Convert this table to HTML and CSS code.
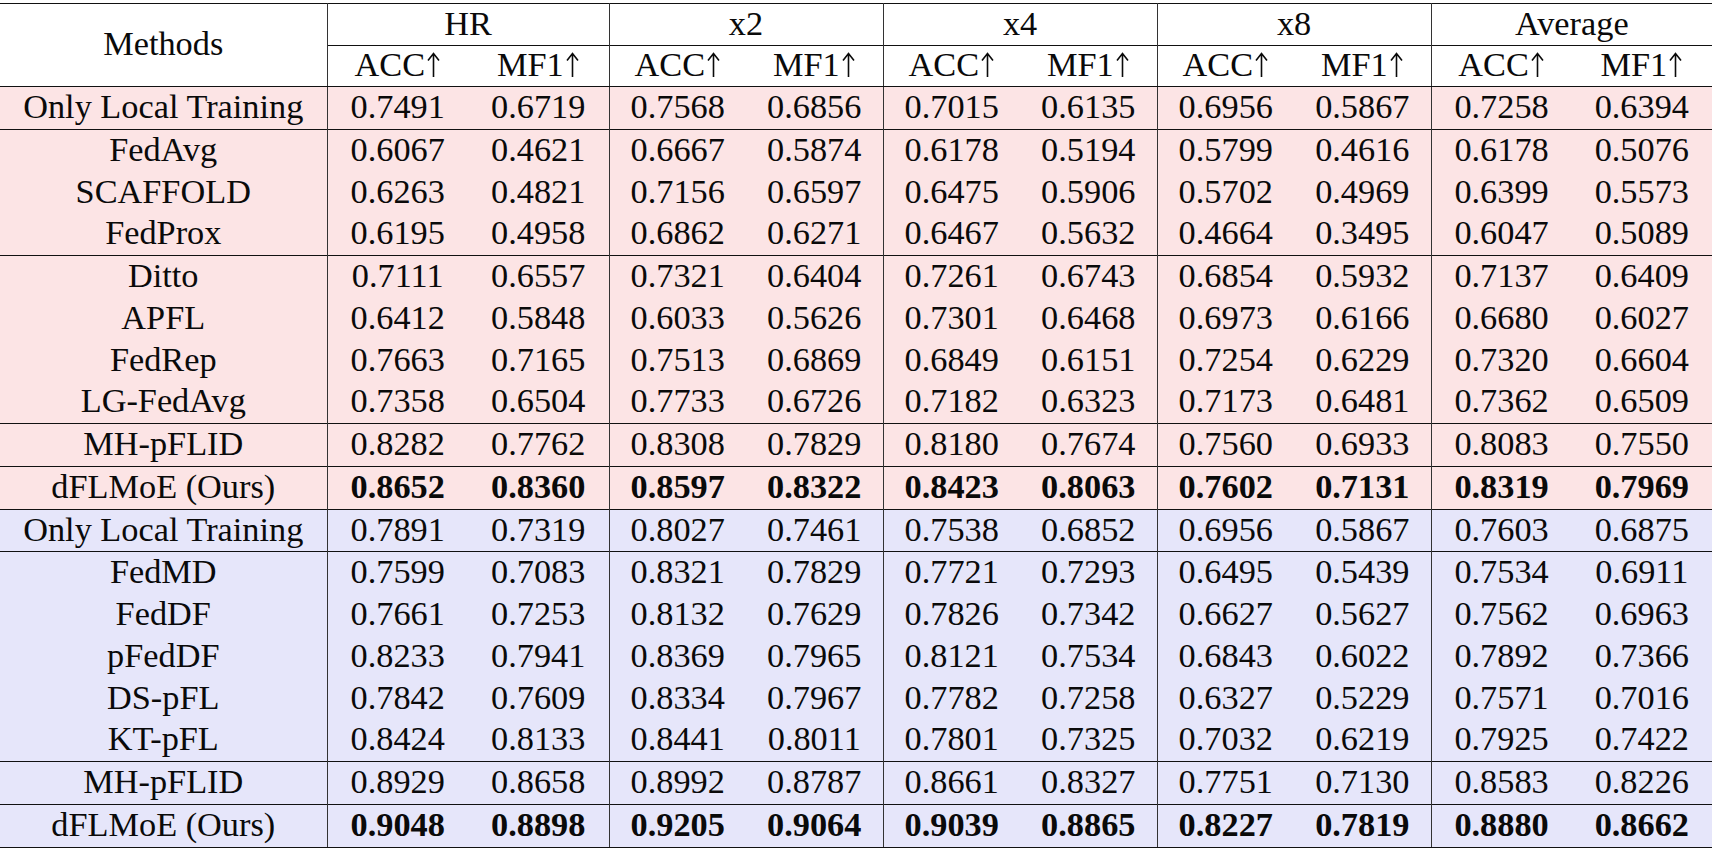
FILE: index.html
```html
<!DOCTYPE html>
<html>
<head>
<meta charset="utf-8">
<link rel="stylesheet" href="styles.css">
</head>
<body>
<table class="results">
  <colgroup>
    <col class="c-method">
    <col class="c-hr"><col class="c-hr">
    <col class="c-mid"><col class="c-mid">
    <col class="c-mid"><col class="c-mid">
    <col class="c-mid"><col class="c-mid">
    <col class="c-avg"><col class="c-avg">
  </colgroup>
  <thead>
    <tr class="h1">
      <th rowspan="2" class="method vr">Methods</th>
      <th colspan="2" class="vr">HR</th>
      <th colspan="2" class="vr">x2</th>
      <th colspan="2" class="vr">x4</th>
      <th colspan="2" class="vr">x8</th>
      <th colspan="2">Average</th>
    </tr>
    <tr class="h2">
      <th>ACC<svg class="up" viewBox="0 0 14 26"><path d="M7 25V2M1.5 8.5L7 1.5l5.5 7"/></svg></th><th class="vr">MF1<svg class="up" viewBox="0 0 14 26"><path d="M7 25V2M1.5 8.5L7 1.5l5.5 7"/></svg></th>
      <th>ACC<svg class="up" viewBox="0 0 14 26"><path d="M7 25V2M1.5 8.5L7 1.5l5.5 7"/></svg></th><th class="vr">MF1<svg class="up" viewBox="0 0 14 26"><path d="M7 25V2M1.5 8.5L7 1.5l5.5 7"/></svg></th>
      <th>ACC<svg class="up" viewBox="0 0 14 26"><path d="M7 25V2M1.5 8.5L7 1.5l5.5 7"/></svg></th><th class="vr">MF1<svg class="up" viewBox="0 0 14 26"><path d="M7 25V2M1.5 8.5L7 1.5l5.5 7"/></svg></th>
      <th>ACC<svg class="up" viewBox="0 0 14 26"><path d="M7 25V2M1.5 8.5L7 1.5l5.5 7"/></svg></th><th class="vr">MF1<svg class="up" viewBox="0 0 14 26"><path d="M7 25V2M1.5 8.5L7 1.5l5.5 7"/></svg></th>
      <th>ACC<svg class="up" viewBox="0 0 14 26"><path d="M7 25V2M1.5 8.5L7 1.5l5.5 7"/></svg></th><th>MF1<svg class="up" viewBox="0 0 14 26"><path d="M7 25V2M1.5 8.5L7 1.5l5.5 7"/></svg></th>
    </tr>
  </thead>
  <tbody>
    <tr class="pink"><td class="vr">Only Local Training</td><td>0.7491</td><td class="vr">0.6719</td><td>0.7568</td><td class="vr">0.6856</td><td>0.7015</td><td class="vr">0.6135</td><td>0.6956</td><td class="vr">0.5867</td><td>0.7258</td><td>0.6394</td></tr>
    <tr class="pink sep"><td class="vr">FedAvg</td><td>0.6067</td><td class="vr">0.4621</td><td>0.6667</td><td class="vr">0.5874</td><td>0.6178</td><td class="vr">0.5194</td><td>0.5799</td><td class="vr">0.4616</td><td>0.6178</td><td>0.5076</td></tr>
    <tr class="pink"><td class="vr">SCAFFOLD</td><td>0.6263</td><td class="vr">0.4821</td><td>0.7156</td><td class="vr">0.6597</td><td>0.6475</td><td class="vr">0.5906</td><td>0.5702</td><td class="vr">0.4969</td><td>0.6399</td><td>0.5573</td></tr>
    <tr class="pink"><td class="vr">FedProx</td><td>0.6195</td><td class="vr">0.4958</td><td>0.6862</td><td class="vr">0.6271</td><td>0.6467</td><td class="vr">0.5632</td><td>0.4664</td><td class="vr">0.3495</td><td>0.6047</td><td>0.5089</td></tr>
    <tr class="pink sep"><td class="vr">Ditto</td><td>0.7111</td><td class="vr">0.6557</td><td>0.7321</td><td class="vr">0.6404</td><td>0.7261</td><td class="vr">0.6743</td><td>0.6854</td><td class="vr">0.5932</td><td>0.7137</td><td>0.6409</td></tr>
    <tr class="pink"><td class="vr">APFL</td><td>0.6412</td><td class="vr">0.5848</td><td>0.6033</td><td class="vr">0.5626</td><td>0.7301</td><td class="vr">0.6468</td><td>0.6973</td><td class="vr">0.6166</td><td>0.6680</td><td>0.6027</td></tr>
    <tr class="pink"><td class="vr">FedRep</td><td>0.7663</td><td class="vr">0.7165</td><td>0.7513</td><td class="vr">0.6869</td><td>0.6849</td><td class="vr">0.6151</td><td>0.7254</td><td class="vr">0.6229</td><td>0.7320</td><td>0.6604</td></tr>
    <tr class="pink"><td class="vr">LG-FedAvg</td><td>0.7358</td><td class="vr">0.6504</td><td>0.7733</td><td class="vr">0.6726</td><td>0.7182</td><td class="vr">0.6323</td><td>0.7173</td><td class="vr">0.6481</td><td>0.7362</td><td>0.6509</td></tr>
    <tr class="pink sep"><td class="vr">MH-pFLID</td><td>0.8282</td><td class="vr">0.7762</td><td>0.8308</td><td class="vr">0.7829</td><td>0.8180</td><td class="vr">0.7674</td><td>0.7560</td><td class="vr">0.6933</td><td>0.8083</td><td>0.7550</td></tr>
    <tr class="pink sep best"><td class="vr">dFLMoE (Ours)</td><td>0.8652</td><td class="vr">0.8360</td><td>0.8597</td><td class="vr">0.8322</td><td>0.8423</td><td class="vr">0.8063</td><td>0.7602</td><td class="vr">0.7131</td><td>0.8319</td><td>0.7969</td></tr>
    <tr class="blue sep"><td class="vr">Only Local Training</td><td>0.7891</td><td class="vr">0.7319</td><td>0.8027</td><td class="vr">0.7461</td><td>0.7538</td><td class="vr">0.6852</td><td>0.6956</td><td class="vr">0.5867</td><td>0.7603</td><td>0.6875</td></tr>
    <tr class="blue sep"><td class="vr">FedMD</td><td>0.7599</td><td class="vr">0.7083</td><td>0.8321</td><td class="vr">0.7829</td><td>0.7721</td><td class="vr">0.7293</td><td>0.6495</td><td class="vr">0.5439</td><td>0.7534</td><td>0.6911</td></tr>
    <tr class="blue"><td class="vr">FedDF</td><td>0.7661</td><td class="vr">0.7253</td><td>0.8132</td><td class="vr">0.7629</td><td>0.7826</td><td class="vr">0.7342</td><td>0.6627</td><td class="vr">0.5627</td><td>0.7562</td><td>0.6963</td></tr>
    <tr class="blue"><td class="vr">pFedDF</td><td>0.8233</td><td class="vr">0.7941</td><td>0.8369</td><td class="vr">0.7965</td><td>0.8121</td><td class="vr">0.7534</td><td>0.6843</td><td class="vr">0.6022</td><td>0.7892</td><td>0.7366</td></tr>
    <tr class="blue"><td class="vr">DS-pFL</td><td>0.7842</td><td class="vr">0.7609</td><td>0.8334</td><td class="vr">0.7967</td><td>0.7782</td><td class="vr">0.7258</td><td>0.6327</td><td class="vr">0.5229</td><td>0.7571</td><td>0.7016</td></tr>
    <tr class="blue"><td class="vr">KT-pFL</td><td>0.8424</td><td class="vr">0.8133</td><td>0.8441</td><td class="vr">0.8011</td><td>0.7801</td><td class="vr">0.7325</td><td>0.7032</td><td class="vr">0.6219</td><td>0.7925</td><td>0.7422</td></tr>
    <tr class="blue sep"><td class="vr">MH-pFLID</td><td>0.8929</td><td class="vr">0.8658</td><td>0.8992</td><td class="vr">0.8787</td><td>0.8661</td><td class="vr">0.8327</td><td>0.7751</td><td class="vr">0.7130</td><td>0.8583</td><td>0.8226</td></tr>
    <tr class="blue sep best last"><td class="vr">dFLMoE (Ours)</td><td>0.9048</td><td class="vr">0.8898</td><td>0.9205</td><td class="vr">0.9064</td><td>0.9039</td><td class="vr">0.8865</td><td>0.8227</td><td class="vr">0.7819</td><td>0.8880</td><td>0.8662</td></tr>
  </tbody>
</table>
</body>
</html>
```

FILE: styles.css
```css
html, body {
  margin: 0;
  padding: 0;
  background: #ffffff;
}

body {
  padding-top: 3px;
}

.results {
  border-collapse: collapse;
  table-layout: fixed;
  width: 1712px;
  font-family: "Liberation Serif", "Times New Roman", serif;
  font-size: 34.3px;
  color: #0a0a0a;
}

.c-method { width: 327px; }
.c-hr { width: 141px; }
.c-mid { width: 137px; }
.c-avg { width: 140.5px; }

.results th,
.results td {
  padding: 0 0 3px 0;
  text-align: center;
  vertical-align: middle;
  font-weight: normal;
  white-space: nowrap;
  line-height: 1;
}

.results thead tr.h1 th {
  border-top: 1.5px solid #111;
  height: 38px;
}

.results thead tr.h2 th {
  border-top: 1px solid #111;
  height: 37px;
}

.results thead tr.h2 th,
.results thead th.method {
  border-bottom: 1px solid #111;
}

.up {
  display: inline-block;
  width: 15px;
  height: 26px;
  margin-left: 1px;
  vertical-align: -2px;
  fill: none;
  stroke: #0a0a0a;
  stroke-width: 1.6;
}

.results tbody td {
  height: 38.75px;
}

.results .vr {
  border-right: 1.2px solid #333;
}

.results tr.pink td { background: #fce4e5; }
.results tr.blue td { background: #e6e6fa; }

.results tr.sep td { border-top: 1px solid #111; }
.results tr.last td { border-bottom: 1.5px solid #111; }

.results tr.best td { font-weight: bold; }
.results tr.best td:first-child { font-weight: normal; }
```
